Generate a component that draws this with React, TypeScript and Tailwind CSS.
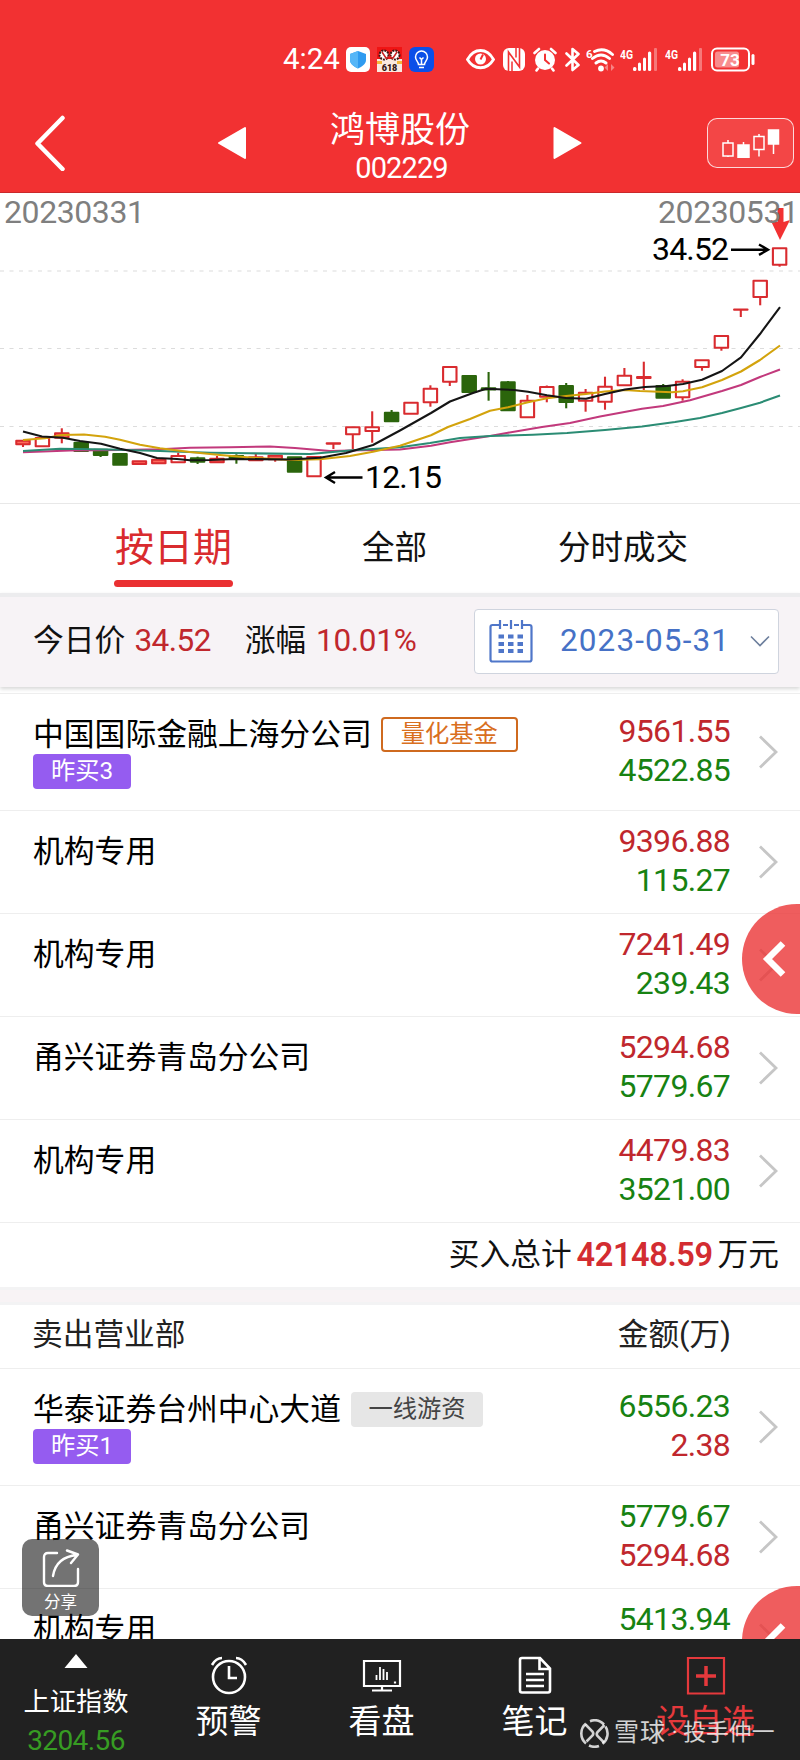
import clsx from 'clsx'
import type { ReactNode } from 'react'

interface Seat {
  name: string
  tag?: { label: string; kind: 'quant' | 'hot' }
  yesterday?: string
  primary: string
  secondary?: string
}

interface Candle {
  top: number
  bottom: number
  high?: number
  low?: number
  down?: boolean
}

const buySeats: Seat[] = [
  {
    name: '中国国际金融上海分公司',
    tag: { label: '量化基金', kind: 'quant' },
    yesterday: '昨买3',
    primary: '9561.55',
    secondary: '4522.85',
  },
  { name: '机构专用', primary: '9396.88', secondary: '115.27' },
  { name: '机构专用', primary: '7241.49', secondary: '239.43' },
  { name: '甬兴证券青岛分公司', primary: '5294.68', secondary: '5779.67' },
  { name: '机构专用', primary: '4479.83', secondary: '3521.00' },
]

const sellSeats: Seat[] = [
  {
    name: '华泰证券台州中心大道',
    tag: { label: '一线游资', kind: 'hot' },
    yesterday: '昨买1',
    primary: '6556.23',
    secondary: '2.38',
  },
  { name: '甬兴证券青岛分公司', primary: '5779.67', secondary: '5294.68' },
  { name: '机构专用', primary: '5413.94' },
]

const candles: Candle[] = [
  { top: 440.7, bottom: 444.3, low: 447 },
  { top: 438, bottom: 446.3, high: 436 },
  { top: 433.3, bottom: 437.7, high: 428.3, low: 443.3 },
  { top: 442.7, bottom: 451, down: true },
  { top: 449.7, bottom: 455, low: 457, down: true },
  { top: 454, bottom: 464.7, down: true },
  { top: 461.3, bottom: 464 },
  { top: 459.7, bottom: 463.3, high: 457.7 },
  { top: 456, bottom: 462.3, high: 452.7 },
  { top: 458.3, bottom: 461.7, high: 456.7, low: 464, down: true },
  { top: 458.7, bottom: 462.3, high: 456 },
  { top: 456, bottom: 459, high: 454.3, low: 463.7, down: true },
  { top: 457.3, bottom: 460.3, high: 453.7 },
  { top: 455.7, bottom: 459.3, low: 461.7 },
  { top: 457.3, bottom: 471.7, down: true },
  { top: 457, bottom: 476.3 },
  { top: 443.4, bottom: 443.6, low: 449 },
  { top: 427.3, bottom: 434.3, low: 449.3 },
  { top: 427.3, bottom: 431, high: 411.3, low: 442.7 },
  { top: 412.7, bottom: 421.3, high: 410, down: true },
  { top: 402.7, bottom: 413.7 },
  { top: 388.7, bottom: 402.3, high: 385.3, low: 406.7 },
  { top: 367, bottom: 381.7, low: 386 },
  { top: 376, bottom: 392, down: true },
  { top: 388.2, bottom: 389.4, high: 372, low: 400.7, down: true },
  { top: 382.3, bottom: 410.3, high: 381, down: true },
  { top: 400.7, bottom: 417.3, high: 395 },
  { top: 387, bottom: 396.7, high: 385.5, low: 402.3 },
  { top: 386, bottom: 402, high: 383, low: 408.3, down: true },
  { top: 392.7, bottom: 400.7, high: 389, low: 411.7 },
  { top: 386.7, bottom: 401.7, high: 376.7, low: 409.7 },
  { top: 375.7, bottom: 385.3, high: 368 },
  { top: 377, bottom: 378, high: 361.7, low: 390 },
  { top: 386, bottom: 397.7, high: 384, down: true },
  { top: 381.7, bottom: 397.3, high: 379.3, low: 400.7 },
  { top: 360.3, bottom: 367, low: 370.7 },
  { top: 336, bottom: 347.7, low: 350.7 },
  { top: 309.6, bottom: 309.8, low: 317 },
  { top: 280.7, bottom: 297, low: 305.3 },
  { top: 248.3, bottom: 264.7, low: 266.7 },
]

const averages = [
  {
    color: '#c2397c',
    points:
      '23,452.3 70,450.5 120,450 160,449.3 190,447.7 230,447.3 270,446.5 295,448 330,451 350,450.5 400,449.5 431,445.7 450,442.3 490,436 508,432.7 542,427 570,423 600,416.5 642,408.7 663,406 690,400.3 722,391 741,385 760,377 780,369.5',
  },
  {
    color: '#2b8c74',
    points:
      '23,451 60,448.7 110,449.5 160,451 210,452.7 250,453.3 310,454 350,450.5 400,447.3 430,443 460,438 490,436 533,434.7 567,433 605,430 642,426.5 675,422 700,418 722,413 741,408 760,402.7 780,395.5',
  },
  {
    color: '#d3a30c',
    points:
      '23,440 45,438.3 62,435 84,434.5 105,436.7 120,439.7 140,444.7 160,448.3 190,452 220,455 250,457.5 290,460 320,459.3 350,456 373,451.7 400,445.7 431,435.3 448,427 470,419 490,410.7 508,407.3 528,402.3 547,398.3 566,396 586,394 605,391.5 625,390 640,391 672,392.3 683,391.3 702,387.3 722,380 741,371.5 760,360 780,345.5',
  },
  {
    color: '#151515',
    points:
      '23,431.5 42,436.5 63,437.7 80,441 101,443.7 120,448.7 140,453 157,458 177,459 190,460.3 210,460 235,459 290,459.5 320,457.7 346,453 373,445 400,430.5 431,413 450,401.5 473,393 486,388.7 514,390 528,391.7 547,395.3 566,398 586,398.7 605,394 625,389.5 645,387 667,386 683,384 702,379.7 722,371 741,357.3 760,334 780,307',
  },
]

function Signal() {
  return (
    <svg className="h-[25px] w-[38px]" viewBox="0 0 38 25" fill="#fff">
      <text x="0" y="11.5" fontSize="13" fontWeight="700" textLength="13" lengthAdjust="spacingAndGlyphs">
        4G
      </text>
      <rect x="13" y="20" width="3.4" height="4" rx="1.5" />
      <rect x="18" y="15.5" width="3" height="8.5" rx="1.5" />
      <rect x="23" y="10.5" width="3" height="13.5" rx="1.5" />
      <rect x="28" y="4.5" width="3.2" height="19.5" rx="1.5" />
      <rect x="34" y="1" width="3" height="23" rx="1" opacity="0.35" />
    </svg>
  )
}

function StatusBar() {
  return (
    <div className="flex h-[94px] items-end pb-[22px] pl-[283px] text-white">
      <span className="w-[63px] text-[29.500px] leading-[25px]">4:24</span>
      <svg className="mr-[7px] h-[25px] w-6" viewBox="0 0 24 25">
        <rect width="24" height="25" rx="5" fill="#fff" />
        <path d="M12 4 20 7v6c0 4-4 6.500-8 8.500C8 19.500 4 17 4 13V7z" fill="#2f9bf0" />
        <path d="M12 4v17.500C8 19.500 4 17 4 13V7z" fill="#56b6f7" />
      </svg>
      <svg className="mr-[7px] h-[25px] w-[25px]" viewBox="0 0 25 25">
        <rect width="25" height="25" fill="#fbe9df" />
        <path d="M0 0h25v12H0z" fill="#f01414" />
        <circle cx="7" cy="8" r="4.500" fill="#fff" stroke="#3b1715" strokeWidth="2" strokeDasharray="2 1" />
        <circle cx="18" cy="8" r="4.500" fill="#fff" stroke="#3b1715" strokeWidth="2" strokeDasharray="2 1" />
        <path d="M9 12l3.500-3 3.500 3M5 5l4 6M20 5l-4 6" stroke="#c22" strokeWidth="1.500" fill="none" />
        <path d="M0 14h5v3H0zM20 14h5v3h-5z" fill="#f5b73a" />
        <text x="12.500" y="23.500" fontSize="9" fontWeight="900" textAnchor="middle" fill="#331513">
          618
        </text>
      </svg>
      <svg className="mr-[32px] h-[25px] w-[25px]" viewBox="0 0 25 25" fill="none" stroke="#fff" strokeWidth="1.500">
        <rect width="25" height="25" rx="6" fill="#0b4fe8" stroke="none" />
        <path d="M9.500 17.500c0-3-3-4-3-7.500a6 6 0 0 1 12 0c0 3.500-3 4.500-3 7.500zM10 20.500h5M12.500 17v-5M10.500 10.500l2 2 2-2" />
      </svg>
      <svg className="mr-2 h-[25px] w-[29px]" viewBox="0 0 29 25" fill="none" stroke="#fff" strokeWidth="2.800">
        <path d="M1.500 12.500C8 .5 21 .5 27.500 12.500 21 23.500 8 23.500 1.500 12.500z" />
        <circle cx="14.500" cy="12" r="5.500" fill="#fff" stroke="none" />
        <path d="M14.500 12.500 17 7.500" stroke="#f23132" strokeWidth="2" />
      </svg>
      <svg className="mr-2 h-[25px] w-[22px]" viewBox="0 0 22 25">
        <rect y="1" width="22" height="23" rx="6" fill="#fff" />
        <path d="M5.500 24V5l11 15V1" fill="none" stroke="#f23132" strokeWidth="1.600" />
        <path d="M9 24V14.500M13 1v9.500" stroke="#f23132" strokeWidth="1.500" />
      </svg>
      <svg className="mr-2 h-[25px] w-6" viewBox="0 0 24 25" fill="none" stroke="#fff" strokeLinecap="round">
        <circle cx="12" cy="13" r="10" fill="#fff" stroke="none" />
        <path d="M1.500 6l4.500-4M22.500 6 18 2M5 21.500 3.500 23.500M19 21.500l1.500 2" strokeWidth="2.600" />
        <path d="M12 7.500V13l4 3.500" stroke="#f23132" strokeWidth="2" />
      </svg>
      <svg className="mr-[5px] h-[25px] w-4" viewBox="0 0 16 25" fill="none" stroke="#fff" strokeWidth="2.600">
        <path d="M1.500 6.500 13.500 18l-6 5V2l6 5L1.500 18.500" strokeLinejoin="round" strokeLinecap="round" />
      </svg>
      <svg className="mr-[5px] h-[25px] w-[29px]" viewBox="0 0 29 25" fill="none" stroke="#fff" strokeWidth="2.900">
        <text x="0" y="10.500" fontSize="11.500" fontWeight="700" fill="#fff" stroke="none">
          6
        </text>
        <path d="M8.500 4.500q9.500-4.500 18 3M6.500 11.500q8.500-7 17 0M10 16q5-4 10 0" strokeLinecap="round" />
        <circle cx="15" cy="21.500" r="2.900" fill="#fff" stroke="none" />
        <path d="M22 17v7l-3.500-3.500zM25 17v7l3.500-3.500z" fill="#fff" stroke="none" opacity="0.4" />
      </svg>
      <span className="mr-[7px] flex">
        <Signal />
      </span>
      <span className="mr-2 flex">
        <Signal />
      </span>
      <svg className="h-[25px] w-11" viewBox="0 0 44 25">
        <rect x="1" y="1.500" width="37" height="22" rx="5" fill="none" stroke="#fff" strokeWidth="2" />
        <rect x="4" y="4.500" width="24" height="16" rx="2.500" fill="#fff" opacity="0.45" />
        <rect x="40.500" y="7" width="3" height="11" rx="1.500" fill="#fff" />
        <text x="19" y="18.500" fontSize="17" fontWeight="700" textAnchor="middle" fill="#fff">
          73
        </text>
      </svg>
    </div>
  )
}

function Header() {
  return (
    <header className="h-[193px] border-b border-[#c9282b] bg-[#f23132]">
      <StatusBar />
      <div className="flex h-[98px] items-center pl-[34px] pr-[6px] text-white">
        <svg className="h-[56px] w-8" viewBox="0 0 32 56" fill="none" stroke="#fff" strokeWidth="4.500" strokeLinecap="round" strokeLinejoin="round">
          <path d="M28.500 3 3.500 28.500l25 25.500" />
        </svg>
        <svg className="ml-[151px] h-[34px] w-[30px]" viewBox="0 0 30 34" fill="#fff" stroke="#fff" strokeWidth="2" strokeLinejoin="round">
          <path d="M28 2v30L2 17z" />
        </svg>
        <div className="flex w-[306px] flex-col items-center pt-[10px]">
          <h1 className="text-[35px] leading-[40px]">鸿博股份</h1>
          <span className="pl-[3px] text-[29px] leading-[35px] tracking-[-0.9px]">002229</span>
        </div>
        <svg className="h-[34px] w-[30px]" viewBox="0 0 30 34" fill="#fff" stroke="#fff" strokeWidth="2" strokeLinejoin="round">
          <path d="M1.500 2v30L27.500 17z" />
        </svg>
        <button className="ml-auto flex h-[50px] w-[87px] items-center justify-center rounded-[10px] border-[1.5px] border-white/80 bg-white/10">
          <svg className="h-[30px] w-[58px]" viewBox="0 0 58 30" fill="none" stroke="#fff" strokeWidth="1.500">
            <path d="M1 15h10v13H1zM6 15v-3M6 28v1" />
            <path d="M16 17h11v13H16z" fill="#fff" />
            <path d="M21.500 17v-3" />
            <path d="M32 8.500h10v13H32zM37 8.500V6M37 21.500v7" />
            <path d="M46.500 2h10v14h-10z" fill="#fff" />
            <path d="M51.500 16v10" />
          </svg>
        </button>
      </div>
    </header>
  )
}

function KLine() {
  return (
    <svg className="block h-[311px] w-full border-b border-[#e8e8e8]" viewBox="0 193 800 310">
      {[271, 348.5, 426.5].map((y) => (
        <line key={y} x1="0" x2="800" y1={y} y2={y} stroke="#dcdcdc" strokeWidth="1.200" strokeDasharray="4 5.500" />
      ))}
      {candles.map((c, i) => {
        const x = 23 + i * 19.4
        const flat = c.bottom - c.top < 5
        const stroke = c.down ? '#2b650c' : '#d92b2f'
        return (
          <g key={i} stroke={stroke} strokeWidth="2.100">
            {c.high && <line x1={x} x2={x} y1={c.high} y2={c.top} />}
            {c.low && <line x1={x} x2={x} y1={c.bottom} y2={c.low} />}
            <rect
              x={x - 6.7}
              y={c.top}
              width="13.4"
              height={c.bottom - c.top}
              fill={c.down ? '#2b650c' : flat && i < 16 ? '#ff6a5c' : 'none'}
              strokeLinejoin="round"
            />
          </g>
        )
      })}
      {averages.map((line) => (
        <polyline key={line.color} points={line.points} fill="none" stroke={line.color} strokeWidth="2.100" strokeLinejoin="round" />
      ))}
      <path d="M777.500 208h6v14l6.500-2-10 20-9.500-20 7 2z" fill="#f23132" />
      <g fontSize="32">
        <text x="4" y="223" fill="#7f7f7f" textLength="141">
          20230331
        </text>
        <text x="658" y="223" fill="#7f7f7f" textLength="141">
          20230531
        </text>
        <text x="652" y="260" textLength="77">
          34.52
        </text>
        <text x="365" y="487.500" textLength="77">
          12.15
        </text>
      </g>
      <g fill="none" stroke="#000" strokeWidth="2.400">
        <path d="M731 249.700h36M759 244.500l9 5.200-9 5.200" />
        <path d="M362.500 477.500h-36M335 472l-9 5.500 9 5.500" />
      </g>
    </svg>
  )
}

function Tabs() {
  return (
    <nav className="flex h-[89px] justify-between pl-[114px] pr-[112px] text-[32.5px] text-[#111]">
      <span className="flex flex-col items-center">
        <span className="h-[76px] text-[39px] leading-[88px] text-[#d92b2e]">按日期</span>
        <span className="h-[7px] w-[119px] rounded-full bg-[#ea3032]" />
      </span>
      <span className="pr-[2px] leading-[88px]">全部</span>
      <span className="leading-[88px]">分时成交</span>
    </nav>
  )
}

function PriceBar() {
  return (
    <section className="flex h-[94px] items-center border-t-4 border-[#ececee] bg-[#f7f3f6] pb-[2px] pl-[33px] pr-[21px] shadow-[0_2px_4px_rgba(0,0,0,0.16)]">
      <span className="text-[30.800px] leading-none text-[#111]">今日价</span>
      <span className="ml-[9px] text-[31.500px] leading-none tracking-[-0.5px] text-[#c0272d]">34.52</span>
      <span className="ml-[34px] text-[30.500px] leading-none text-[#111]">涨幅</span>
      <span className="ml-[10px] text-[31.500px] leading-none tracking-[-0.3px] text-[#c0272d]">10.01%</span>
      <div className="ml-auto flex h-[65px] w-[305px] items-center rounded-[4px] border-[1.5px] border-[#cfd4de] bg-white pl-[14px] pr-2 text-[#4671c6]">
        <svg className="h-[44px] w-[44px]" viewBox="0 0 44 44" fill="none" stroke="#4f76c9" strokeWidth="2.200">
          <path d="M11 6H3.500q-2 0-2 2v32.500q0 2 2 2h37q2 0 2-2V8q0-2-2-2H33M14 6h5M25 6h5M11 1v9M22 1v9M33 1v9" />
          <path d="M9.500 17.500h24.500M9.500 25h24.500M9.500 32h24.500" strokeWidth="4" strokeDasharray="5.500 4" />
        </svg>
        <span className="ml-[27px] text-[31.500px] leading-none tracking-[1.100px]">2023-05-31</span>
        <svg className="ml-auto h-[12px] w-[20px]" viewBox="0 0 20 12" fill="none" stroke="#6d7f9d" strokeWidth="1.600">
          <path d="M1 1.500l9 9 9-9" />
        </svg>
      </div>
    </section>
  )
}

function SeatRow({ seat, side }: { seat: Seat; side: 'buy' | 'sell' }) {
  const red = 'text-[#c0272d]'
  const green = 'text-[#178212]'

  return (
    <li className={clsx('flex shrink-0 items-center border-b-[1.5px] border-[#eee] pl-[33px] pr-[22px]', seat.yesterday ? 'h-[117px]' : 'h-[103px]')}>
      <div className="self-start pt-[23px]">
        <div className="flex h-[35px] items-center text-[30.800px] leading-none text-black">
          <span className="pt-[2px]">{seat.name}</span>
          {seat.tag && (
            <span
              className={clsx(
                'flex h-[35px] items-center justify-center rounded-[4px] text-[24.300px]',
                seat.tag.kind === 'quant'
                  ? 'ml-[9px] w-[137px] border-2 border-[#cf6a1f] text-[#d9701f]'
                  : 'ml-[10px] w-[132px] bg-[#e6e6e6] text-[#444]',
              )}
            >
              {seat.tag.label}
            </span>
          )}
        </div>
        {seat.yesterday && (
          <span className="mt-[2px] flex h-[35px] w-[98px] items-center justify-center rounded-[4px] bg-[#955cf0] text-[24.300px] leading-none text-white">
            {seat.yesterday}
          </span>
        )}
      </div>
      <div className="ml-auto flex h-[81px] flex-col text-right text-[32px] leading-[39.300px] tracking-[-0.7px]">
        <span className={side === 'buy' ? red : green}>{seat.primary}</span>
        <span className={side === 'buy' ? green : red}>{seat.secondary}</span>
      </div>
      <svg className="ml-[28px] h-[34px] w-5" viewBox="0 0 20 34" fill="none" stroke="#c6c6c6" strokeWidth="2.800">
        <path d="M2 1.500l16 15.500L2 32.500" />
      </svg>
    </li>
  )
}

function DrawerHandle({ className }: { className: string }) {
  return (
    <div className={clsx('absolute left-[742px] flex size-[110px] items-center rounded-full bg-[#eb3436]/80 pl-[20px]', className)}>
      <svg className="h-9 w-6" viewBox="0 0 24 36" fill="none" stroke="#fff" strokeWidth="6.500">
        <path d="M21 2.500 5.500 18 21 33.500" />
      </svg>
    </div>
  )
}

function NavItem({ label, className, children }: { label: string; className?: string; children: ReactNode }) {
  return (
    <div className={clsx('flex flex-col items-center pt-[17px]', className ?? 'w-[153px] text-white')}>
      <svg className="h-[39px] w-[40px]" viewBox="0 0 40 39" fill="none" stroke="currentColor" strokeWidth="2.600">
        {children}
      </svg>
      <span className="mt-[8px] text-[33px] leading-[38px]">{label}</span>
    </div>
  )
}

function BottomNav() {
  return (
    <footer className="relative flex h-[121px] shrink-0 bg-[#212121]">
      <div className="flex w-[152px] flex-col items-center pt-[15px] text-white">
        <svg className="h-[14px] w-6 shrink-0" viewBox="0 0 24 14" fill="#fff">
          <path d="M12 0 23.500 14H.5z" />
        </svg>
        <span className="mt-[15px] text-[26.300px] leading-[38px]">上证指数</span>
        <span className="text-[28px] leading-[39px] tracking-[-0.6px] text-[#379c23]">3204.56</span>
      </div>
      <NavItem label="预警">
        <circle cx="20" cy="21" r="16" />
        <path d="M20 10v12h8M3 9q4-7 10-7M37 9q-4-7-10-7" />
      </NavItem>
      <NavItem label="看盘">
        <path d="M2 5h36v25H2z" strokeWidth="2.200" />
        <path d="M10 34.500h20M20 30v4M33 25.500v2" strokeWidth="2.200" />
        <path d="M14.500 19v5M18 11v13M21.500 13v11M25 16v8" strokeWidth="1.800" />
      </NavItem>
      <NavItem label="笔记">
        <path d="M25 2H7Q5 2 5 4v30.500q0 2 2 2h26q2 0 2-2V12.500zM24.500 2v11H35M11 18h18M11 24h18M11 30h18" />
      </NavItem>
      <NavItem label="设自选" className="flex-1 text-[#e5393c]">
        <path d="M2 2h36v35.500H2z" strokeWidth="2.200" />
        <path d="M20 10v20M10 20h20" strokeWidth="3.500" />
      </NavItem>
      <div className="absolute left-[580px] top-[79px] flex items-center whitespace-pre leading-[30px] text-white/80">
        <svg className="mr-[5px] size-[29px]" viewBox="0 0 29 29" fill="none" stroke="currentColor" strokeWidth="2.600">
          <path d="M6 24.500A13 13 0 0 1 6 4.500M10 2.200a13 13 0 0 1 14 3.300M25.500 7.500a13 13 0 0 1-3 17.300M19 27a13 13 0 0 1-10-.5" />
          <path d="M5.500 5.500l7 7q1.500 2 0 4l-6 6M24.500 6l-7 7q-1.500 2 0 4l6.500 6.500" />
        </svg>
        <span className="text-[25px] tracking-[1px]">雪球</span>
        <span className="text-[22.800px]"> · 投手仲一</span>
      </div>
    </footer>
  )
}

export default function App() {
  return (
    <div className="relative flex h-[1760px] w-[800px] flex-col overflow-hidden bg-white font-['Roboto','Noto_Sans_CJK_SC',sans-serif]">
      <Header />
      <main className="relative h-[1446px] overflow-hidden">
        <KLine />
        <Tabs />
        <PriceBar />
        <ul className="mt-[6px] border-t-[1.500px] border-[#eee]">
          {buySeats.map((seat, i) => (
            <SeatRow key={i} seat={seat} side="buy" />
          ))}
        </ul>
        <div className="flex h-[64px] items-center justify-end pr-[21px] pt-px text-[30.700px] leading-none text-[#111]">
          买入总计
          <span className="mx-[5px] text-[32.500px] font-semibold tracking-[-0.400px] text-[#d32c31]">42148.59</span>
          万元
        </div>
        <div className="h-[18px] border-y-[3px] border-[#f3f3f4] bg-[#f8f3f5]" />
        <div className="flex h-[64px] items-center justify-between border-b-[1.500px] border-[#eee] pb-[2px] pl-[32px] pr-[69px] text-[30.700px] leading-none text-[#222]">
          <span>卖出营业部</span>
          <span>金额(万)</span>
        </div>
        <ul>
          {sellSeats.map((seat, i) => (
            <SeatRow key={i} seat={seat} side="sell" />
          ))}
        </ul>
        <DrawerHandle className="top-[711px]" />
        <DrawerHandle className="top-[1393px]" />
        <button className="absolute left-[22px] top-[1346px] flex size-[77px] flex-col items-center rounded-[10px] bg-black/55 pt-[10px] text-white">
          <svg className="h-[38px] w-[38px]" viewBox="0 0 38 38" fill="none" stroke="#fff" strokeWidth="2.400" strokeLinecap="round" strokeLinejoin="round">
            <path d="M15 4H6Q2 4 2 8v25q0 4 4 4h26q4 0 4-4V20M11 27Q14 8 35 6M25 1.500 36 5.500 29 14" />
          </svg>
          <span className="mt-[7px] text-[16.500px] leading-[18px]">分享</span>
        </button>
      </main>
      <BottomNav />
    </div>
  )
}
